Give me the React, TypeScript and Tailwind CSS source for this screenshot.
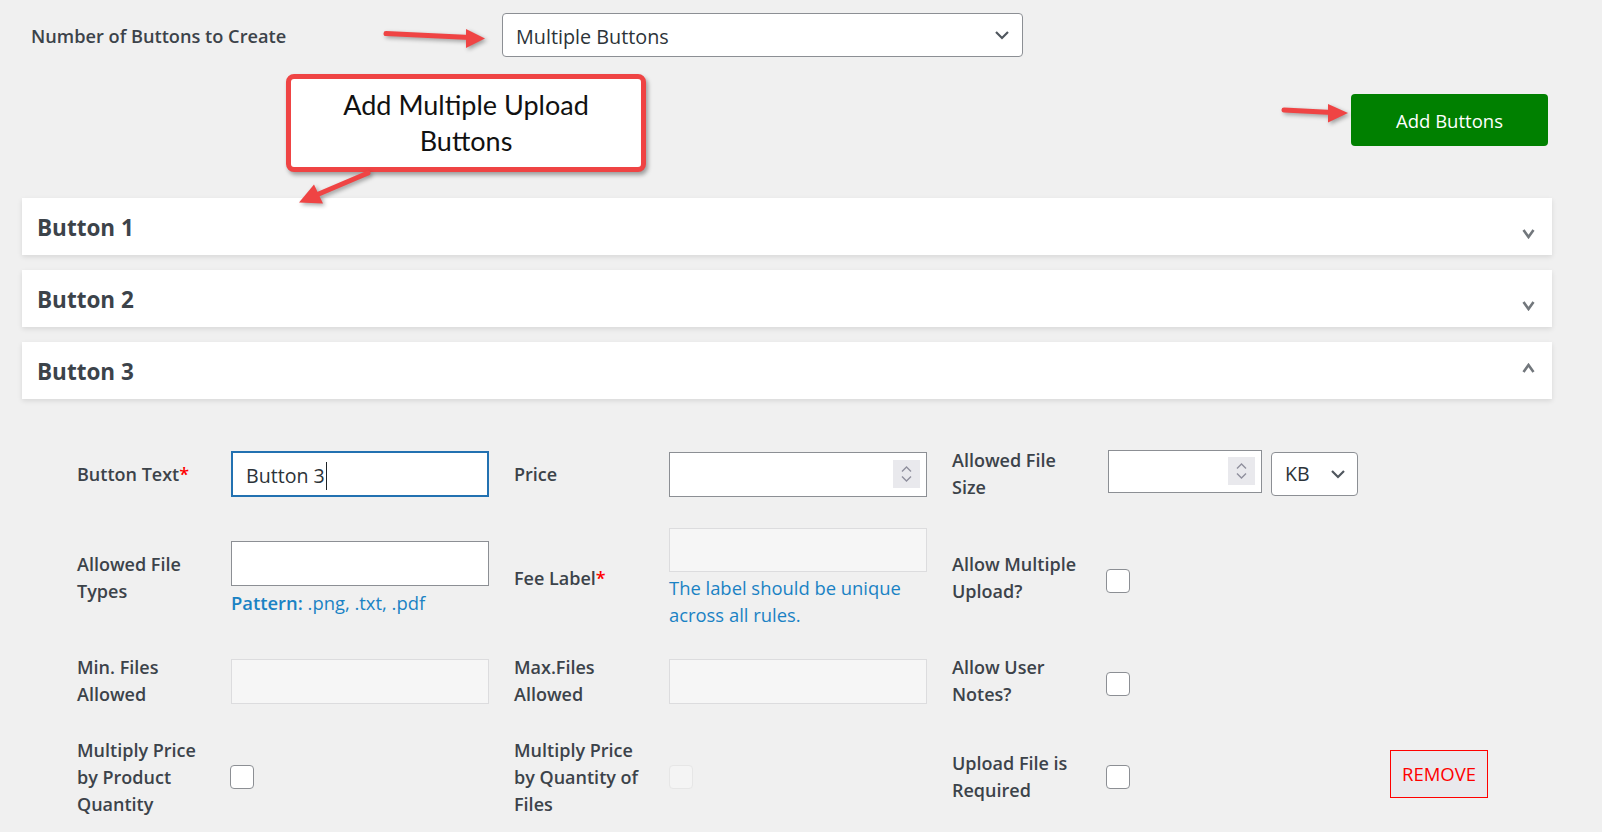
import React from 'react';

const labelCls = 'text-[18px] leading-[27px] font-semibold text-[#3c434a]';
const helpCls = 'text-[18.4px] leading-[27px] text-[#1a82c4]';

const SpinUpDown: React.FC = () => (
  <div className="flex h-[28px] w-[27px] flex-col items-center justify-center gap-[4px] bg-[#e9e9ed]">
    <svg width="11" height="6" viewBox="0 0 11 6">
      <path d="M1 5.5 L5.5 1 L10 5.5" fill="none" stroke="#8f8f9d" strokeWidth="1.4" />
    </svg>
    <svg width="11" height="6" viewBox="0 0 11 6">
      <path d="M1 0.5 L5.5 5 L10 0.5" fill="none" stroke="#8f8f9d" strokeWidth="1.4" />
    </svg>
  </div>
);

const SelectChevron: React.FC = () => (
  <svg width="16" height="10" viewBox="0 0 16 10">
    <path d="M2 2 L8 8 L14 2" fill="none" stroke="#50575e" strokeWidth="2.2" />
  </svg>
);

const Checkbox: React.FC<{ disabled?: boolean; className?: string }> = ({ disabled, className = '' }) => (
  <span
    className={`block h-[24px] w-[24px] rounded-[4px] border ${
      disabled ? 'border-[#e6e6e6] bg-[#f4f4f4]' : 'border-[#8c8f94] bg-white'
    } ${className}`}
  />
);

const TextBox: React.FC<{ muted?: boolean }> = ({ muted }) => (
  <div
    className={`h-[45px] w-[258px] border ${
      muted ? 'border-[#dcdcde] bg-[#f6f6f6]' : 'border-[#8c8f94] bg-white'
    }`}
  />
);

const Panel: React.FC<{ title: string; open?: boolean }> = ({ title, open }) => (
  <div className="flex h-[57px] items-center justify-between bg-white pl-[15px] pr-[17px] shadow-[0_2px_5px_rgba(0,0,0,0.1)]">
    <span className="translate-y-[1px] text-[22.5px] font-bold text-[#3c434a]">{title}</span>
    {open ? (
      <svg width="13" height="10" viewBox="0 0 13 10" className="-translate-y-[3px]">
        <path d="M1.5 9 L6.5 2 L11.5 9" fill="none" stroke="#72777c" strokeWidth="2.6" />
      </svg>
    ) : (
      <svg width="13" height="10" viewBox="0 0 13 10" className="translate-y-[7px]">
        <path d="M1.5 1 L6.5 8 L11.5 1" fill="none" stroke="#72777c" strokeWidth="2.6" />
      </svg>
    )}
  </div>
);

export default function App() {
  return (
    <div className="relative h-[832px] w-full overflow-hidden bg-[#f0f0f0] font-['Open_Sans',sans-serif]">
      {/* Top row */}
      <div className="flex items-center pl-[31px] pt-[13px]">
        <span className="w-[471px] translate-y-[2px] text-[18.2px] font-semibold text-[#3c434a]">Number of Buttons to Create</span>
        <div className="flex h-[44px] w-[521px] items-center justify-between rounded-[4px] border border-[#8c8f94] bg-white pl-[13px] pr-[12px]">
          <span className="translate-y-[2px] text-[19.8px] text-[#2c3338]">Multiple Buttons</span>
          <SelectChevron />
        </div>
      </div>

      <div className="mt-[37px] flex justify-end pr-[54px]">
        <button className="flex h-[52px] w-[197px] items-center justify-center rounded-[4px] bg-[#008000] pt-[1px] text-[18.5px] text-white">
          Add Buttons
        </button>
      </div>

      {/* Accordion */}
      <div className="ml-[22px] mr-[50px] mt-[52px] flex flex-col gap-[15px]">
        <Panel title="Button 1" />
        <Panel title="Button 2" />
        <Panel title="Button 3" open />
      </div>

      {/* Button 3 fields */}
      <div className="mt-[21px] grid grid-cols-[154px_283px_155px_283px_154px_1fr] grid-rows-[108px_100px_106px_86px] items-center pl-[77px]">
        {/* row 1 */}
        <div className={labelCls}>
          Button Text<span className="text-[#ff0000]">*</span>
        </div>
        <div className="flex h-[46px] w-[258px] items-center border-2 border-[#2271b1] bg-white pl-[13px] pt-[4px]">
          <span className="text-[19.6px] text-[#2c3338]">Button 3</span>
          <span className="ml-[1px] h-[28px] w-px bg-[#1d2327]" />
        </div>
        <div className={labelCls}>Price</div>
        <div className="flex h-[45px] w-[258px] items-center justify-end border border-[#8c8f94] bg-white pr-[6px]">
          <SpinUpDown />
        </div>
        <div className={labelCls}>
          Allowed File
          <br />
          Size
        </div>
        <div className="flex items-center gap-[9px] pl-[2px]">
          <div className="flex h-[43px] w-[154px] -translate-y-[3px] items-center justify-end border border-[#8c8f94] bg-white pr-[6px]">
            <SpinUpDown />
          </div>
          <div className="flex h-[44px] w-[87px] items-center justify-between rounded-[4px] border border-[#8c8f94] bg-white pl-[13px] pr-[11px]">
            <span className="text-[19.5px] text-[#2c3338]">KB</span>
            <SelectChevron />
          </div>
        </div>

        {/* row 2 */}
        <div className={labelCls}>
          Allowed File
          <br />
          Types
        </div>
        <div className="flex flex-col">
          <TextBox />
          <div className={`${helpCls} mt-[3px] text-[18.2px]`}>
            <span className="font-semibold">Pattern:</span> .png, .txt, .pdf
          </div>
        </div>
        <div className={labelCls}>
          Fee Label<span className="text-[#ff0000]">*</span>
        </div>
        <div className="flex flex-col">
          <div className="h-[44px] w-[258px] border border-[#dcdcde] bg-[#f6f6f6]" />
          <div className={`${helpCls} mt-[2px]`}>
            The label should be unique
            <br />
            across all rules.
          </div>
        </div>
        <div className={labelCls}>
          Allow Multiple
          <br />
          Upload?
        </div>
        <div>
          <Checkbox className="translate-y-[3px]" />
        </div>

        {/* row 3 */}
        <div className={labelCls}>
          Min. Files
          <br />
          Allowed
        </div>
        <div>
          <TextBox muted />
        </div>
        <div className={labelCls}>
          Max.Files
          <br />
          Allowed
        </div>
        <div>
          <TextBox muted />
        </div>
        <div className={labelCls}>
          Allow User
          <br />
          Notes?
        </div>
        <div>
          <Checkbox className="translate-y-[3px]" />
        </div>

        {/* row 4 */}
        <div className={labelCls}>
          Multiply Price
          <br />
          by Product
          <br />
          Quantity
        </div>
        <div className="-ml-[1px]">
          <Checkbox />
        </div>
        <div className={labelCls}>
          Multiply Price
          <br />
          by Quantity of
          <br />
          Files
        </div>
        <div>
          <Checkbox disabled />
        </div>
        <div className={labelCls}>
          Upload File is
          <br />
          Required
        </div>
        <div className="flex items-center">
          <Checkbox />
          <button className="ml-[260px] flex h-[48px] w-[98px] -translate-y-[3px] items-center justify-center border border-[#ff0000] bg-[#e9e9ed] text-[18.5px] text-[#ff0000]">
            REMOVE
          </button>
        </div>
      </div>

      {/* Annotation: callout */}
      <div className="absolute left-[286px] top-[74px] flex h-[98px] w-[360px] flex-col items-center justify-center rounded-[8px] border-[5px] border-[#ef4444] bg-white font-['Lato',sans-serif] text-[27px] leading-[36px] text-[#111] shadow-[2px_3px_4px_rgba(0,0,0,0.35)]">
        <span>Add Multiple Upload</span>
        <span>Buttons</span>
      </div>

      {/* Annotation arrows */}
      <svg
        className="pointer-events-none absolute left-0 top-0"
        width="1602"
        height="832"
        viewBox="0 0 1602 832"
        style={{ filter: 'drop-shadow(2px 2px 2px rgba(0,0,0,0.35))' }}
      >
        <g fill="#ef4444" stroke="none">
          <line x1="386" y1="33.5" x2="470" y2="37.5" stroke="#ef4444" strokeWidth="5" strokeLinecap="round" />
          <polygon points="485,38.5 466,29 466,48" />
          <line x1="1284" y1="110" x2="1332" y2="112.5" stroke="#ef4444" strokeWidth="5" strokeLinecap="round" />
          <polygon points="1348,113 1328,104 1328,122.5" />
          <line x1="368" y1="173" x2="314" y2="196" stroke="#ef4444" strokeWidth="5" strokeLinecap="round" />
          <polygon points="299,202.5 314,184.5 323,203.5" />
        </g>
      </svg>
    </div>
  );
}
